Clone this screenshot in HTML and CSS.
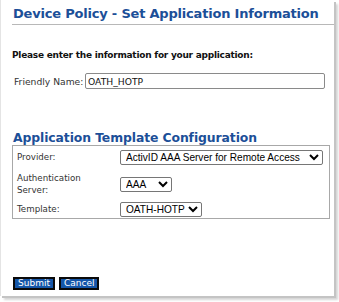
FILE: index.html
```html
<!DOCTYPE html>
<html>
<head>
<meta charset="utf-8">
<link rel="stylesheet" href="styles.css">
</head>
<body>
<div class="page">
  <h1 class="title">Device Policy - Set Application Information</h1>
  <p class="intro">Please enter the information for your application:</p>
  <div class="friendly">
    <label class="flabel">Friendly Name:</label>
    <input class="finput" type="text" value="OATH_HOTP">
  </div>
  <h2 class="section">Application Template Configuration</h2>
  <div class="box">
    <div class="row">
      <span class="rlabel">Provider:</span>
      <select class="sel sel-provider"><option>ActivID AAA Server for Remote Access</option></select>
    </div>
    <div class="row row-two">
      <span class="rlabel">Authentication<br>Server:</span>
      <select class="sel sel-aaa"><option>AAA</option></select>
    </div>
    <div class="row row-three">
      <span class="rlabel">Template:</span>
      <select class="sel sel-tpl"><option>OATH-HOTP</option></select>
    </div>
  </div>
  <div class="buttons">
    <button class="btn">Submit</button>
    <button class="btn">Cancel</button>
  </div>
</div>
</body>
</html>
```
FILE: styles.css
```css
html, body { margin: 0; padding: 0; background: #fff; }
body { width: 339px; height: 302px; overflow: hidden; }
.page {
  width: 334px;
  height: 296px;
  box-sizing: border-box;
  border-left: 1px solid #e4e4e4;
  box-shadow: 2px 2px 0 #c4c4c4, 4px 4px 2px #d6d6d6;
  background: #fff;
  padding: 0 0 0 11px;
  font-family: "DejaVu Sans", Verdana, sans-serif;
}
.title {
  margin: 0;
  padding: 6px 0 3px 1px;
  font-size: 13px;
  line-height: 15px;
  font-weight: bold;
  color: #1c4f98;
  border-bottom: 1px solid #b8b8b8;
  letter-spacing: -0.2px;
  white-space: nowrap;
}
.intro {
  margin: 25px 0 0 0;
  font-size: 9px;
  line-height: 11px;
  font-weight: bold;
  color: #111;
  letter-spacing: -0.25px;
}
.friendly {
  display: flex;
  align-items: center;
  margin-top: 12px;
  padding-left: 2px;
}
.flabel { font-size: 9.2px; color: #333; width: 71px; }
.finput {
  width: 240px;
  height: 16px;
  box-sizing: border-box;
  border: 1px solid #8a8a8a;
  border-radius: 2px;
  font-family: "DejaVu Sans", Verdana, sans-serif;
  font-size: 9.2px;
  line-height: 14px;
  padding: 0 2px;
  color: #111;
  margin: 0;
}
.section {
  margin: 41px 0 0 1px;
  font-size: 12.4px;
  line-height: 15px;
  font-weight: bold;
  color: #1c4f98;
  letter-spacing: -0.1px;
}
.box {
  width: 318px;
  box-sizing: border-box;
  border: 1px solid #a8a8a8;
  padding: 4px 5px 1px 4px;
}
.row {
  display: flex;
  align-items: center;
  height: 15px;
}
.row-two { height: 23px; margin-top: 8px; }
.row-three { margin-top: 6px; }
.rlabel {
  width: 103px;
  font-size: 8.7px;
  color: #333;
  line-height: 11.5px;
}
.sel {
  font-family: "Liberation Sans", Arial, sans-serif;
  font-size: 10.1px;
  height: 15px;
  box-sizing: border-box;
  border: 1px solid #767676;
  border-radius: 2px;
  background: #fff;
  color: #000;
  padding: 0 0 0 1px;
  margin: 0;
}
.sel-provider { width: 203px; }
.sel-aaa { width: 52px; }
.sel-tpl { width: 82px; }
.buttons {
  display: flex;
  gap: 4px;
  margin-top: 58px;
  padding-left: 1px;
}
.btn {
  margin: 0;
  font-family: "DejaVu Sans", Verdana, sans-serif;
  font-size: 9px;
  color: #fff;
  background: #1556a8;
  border: 2px solid #0a0a0a;
  padding: 0 3px;
  height: 13px;
  line-height: 9px;
  box-sizing: border-box;
}
```
